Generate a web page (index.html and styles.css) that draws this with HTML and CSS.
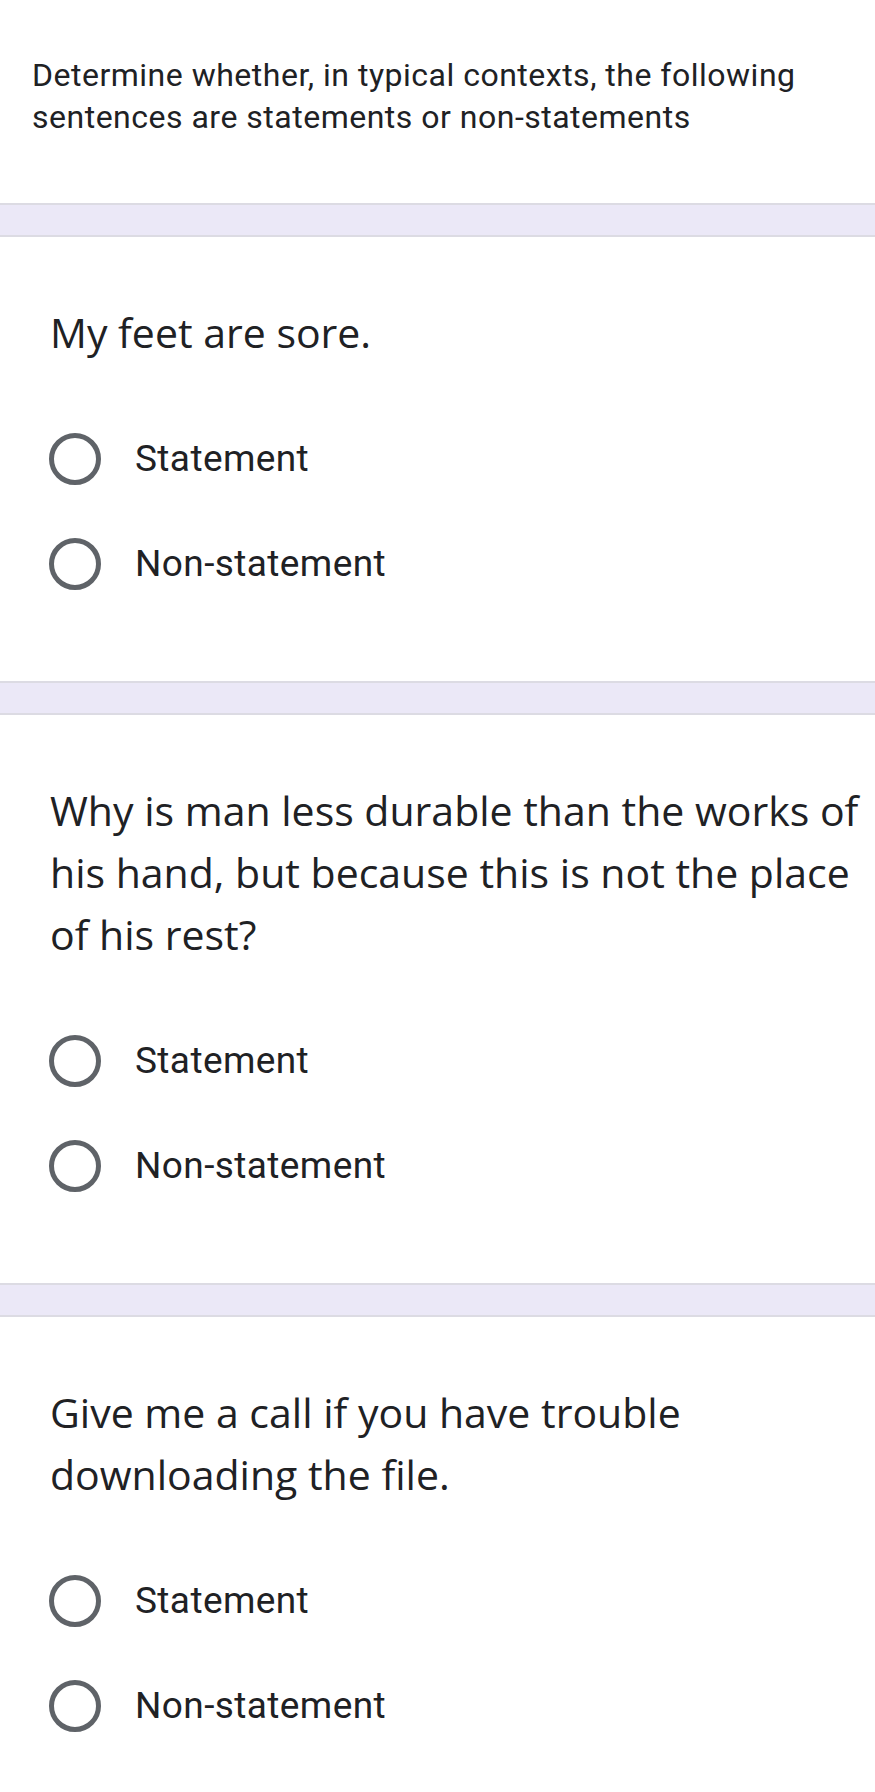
FILE: index.html
```html
<!DOCTYPE html>
<html lang="en">
<head>
<meta charset="utf-8">
<title>Statements quiz</title>
<link rel="stylesheet" href="styles.css">
</head>
<body>
  <section class="header">
    <p class="desc">Determine whether, in typical contexts, the following sentences are statements or non-statements</p>
  </section>
  <div class="band"></div>
  <section class="question">
    <h2 class="title">My feet are sore.</h2>
    <div class="options">
      <label class="option"><span class="radio"></span><span class="label">Statement</span></label>
      <label class="option"><span class="radio"></span><span class="label">Non-statement</span></label>
    </div>
  </section>
  <div class="band"></div>
  <section class="question">
    <h2 class="title">Why is man less durable than the works of his hand, but because this is not the place of his rest?</h2>
    <div class="options">
      <label class="option"><span class="radio"></span><span class="label">Statement</span></label>
      <label class="option"><span class="radio"></span><span class="label">Non-statement</span></label>
    </div>
  </section>
  <div class="band"></div>
  <section class="question">
    <h2 class="title">Give me a call if you have trouble downloading the file.</h2>
    <div class="options">
      <label class="option"><span class="radio"></span><span class="label">Statement</span></label>
      <label class="option"><span class="radio"></span><span class="label">Non-statement</span></label>
    </div>
  </section>
</body>
</html>
```
FILE: styles.css
```css
html, body {
  margin: 0;
  padding: 0;
  background: #ffffff;
}
body {
  font-family: Roboto, "Liberation Sans", sans-serif;
  color: #202124;
}
.header {
  padding: 54px 24px 65px 32px;
}
.desc {
  margin: 0;
  font-family: Roboto, "Liberation Sans", sans-serif;
  font-size: 32px;
  line-height: 42px;
  letter-spacing: 0.5px;
  color: #202124;
}
.band {
  height: 30px;
  background: #ebe8f7;
  border-top: 2px solid #dcdbe3;
  border-bottom: 2px solid #dcdbe3;
}
.question {
  padding: 64px 6px 65px 50px;
}
.title {
  margin: 0;
  font-family: "Open Sans", sans-serif;
  font-weight: 400;
  font-size: 41px;
  line-height: 62px;
  color: #202124;
}
.options {
  margin-top: 43px;
  display: flex;
  flex-direction: column;
}
.option {
  height: 105px;
  display: flex;
  align-items: center;
}
.radio {
  box-sizing: border-box;
  width: 52px;
  height: 52px;
  border: 5px solid #5f6368;
  border-radius: 50%;
  margin-left: -1px;
  flex: none;
}
.label {
  margin-left: 34px;
  font-size: 37px;
  letter-spacing: 0.4px;
  color: #202124;
}
```
